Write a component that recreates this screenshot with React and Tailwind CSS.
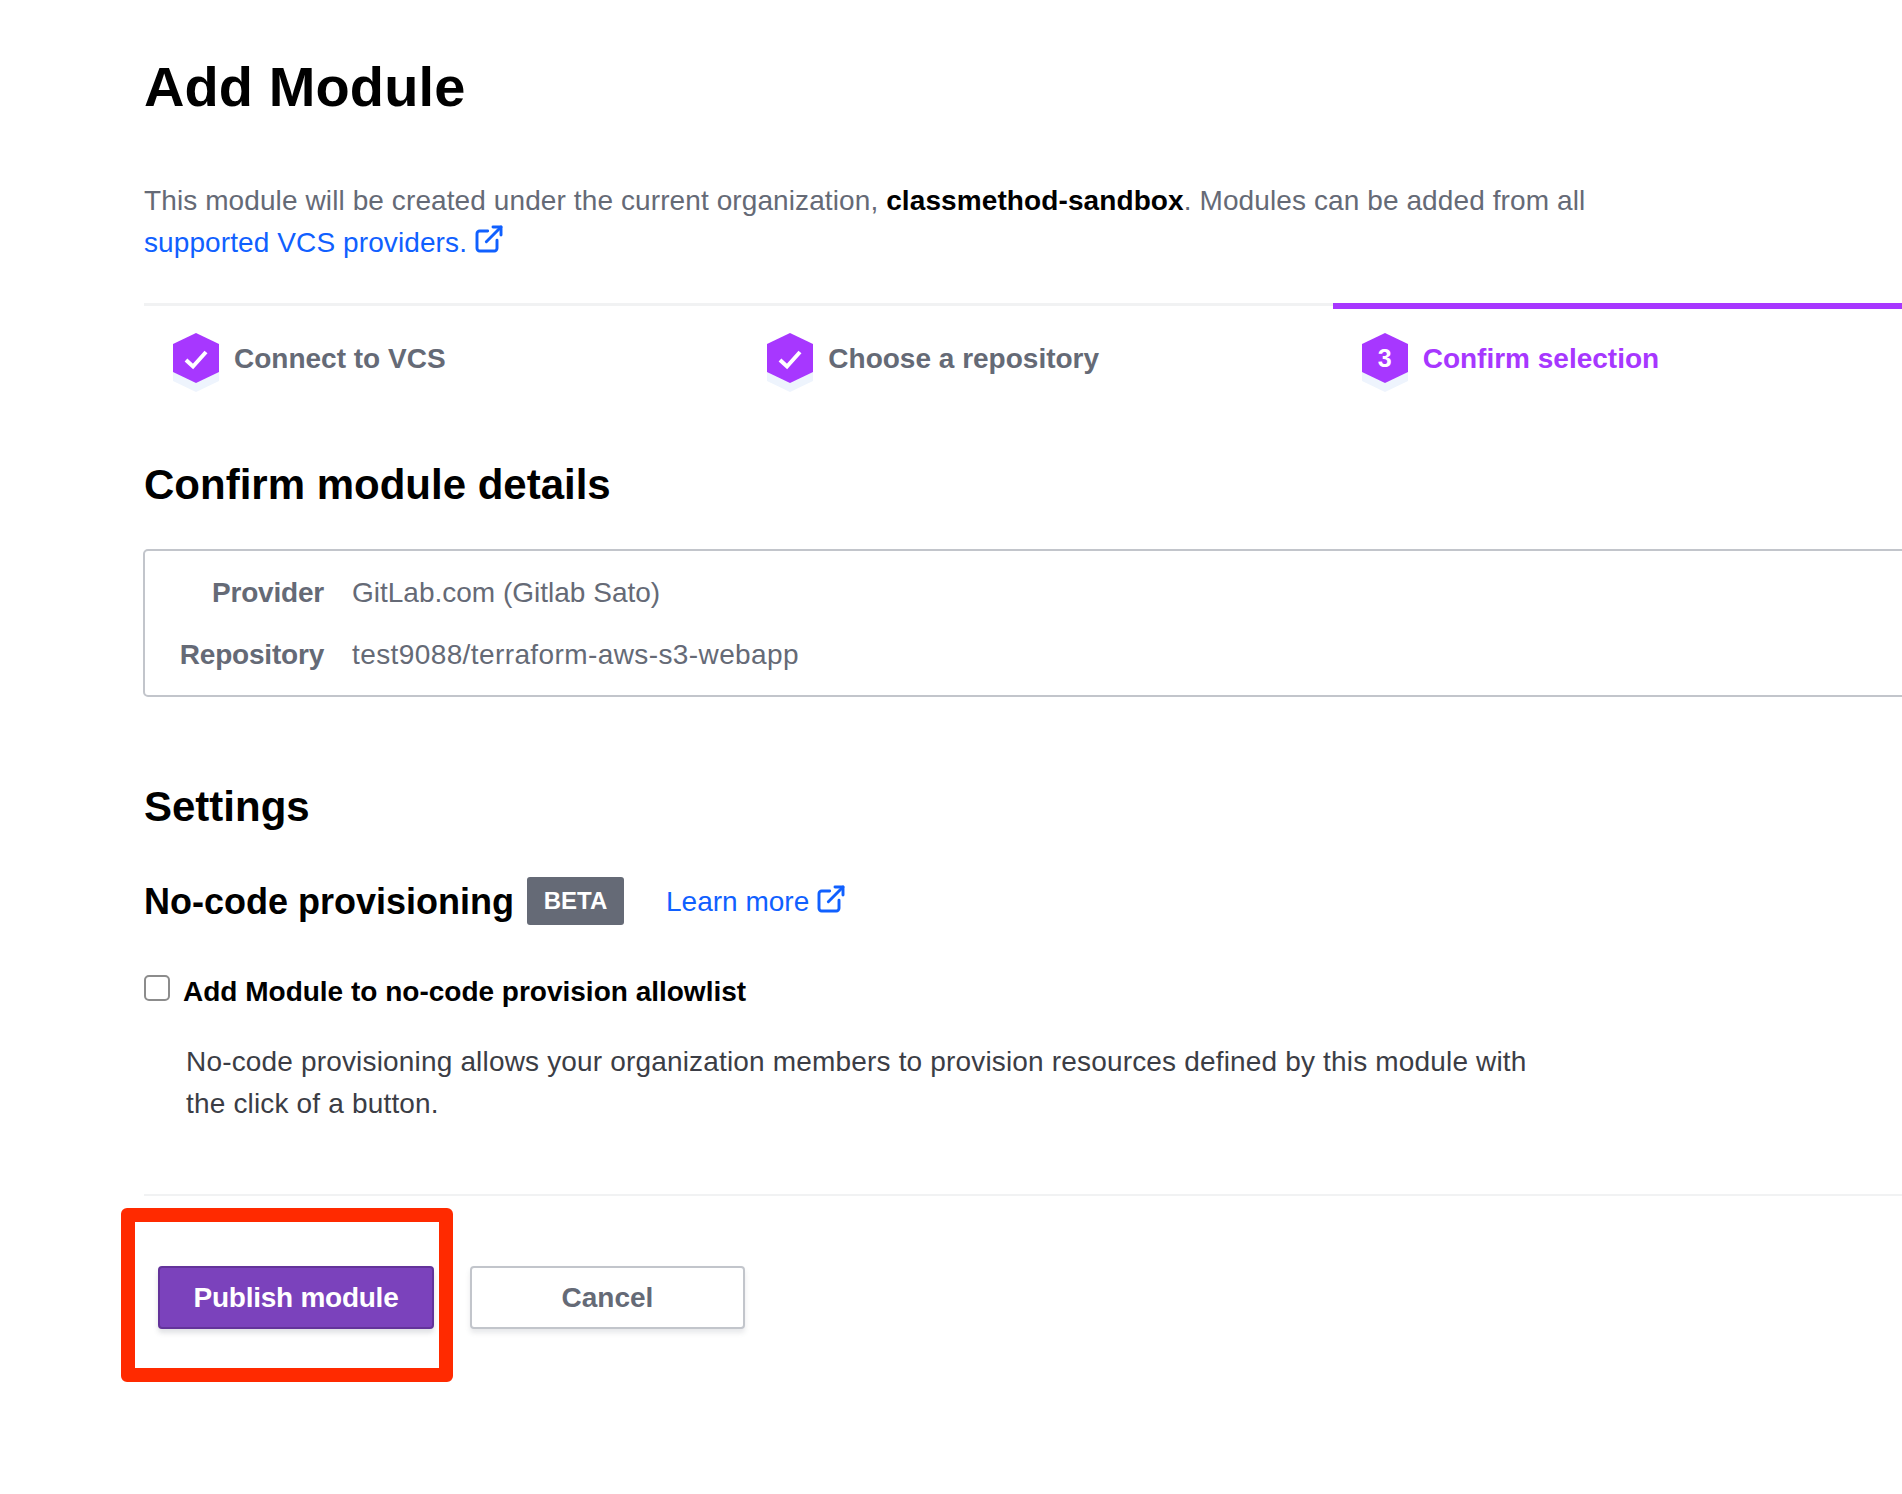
import { ExternalLink } from "lucide-react";

const steps = [
  { label: "Connect to VCS", done: true },
  { label: "Choose a repository", done: true },
  { label: "Confirm selection", done: false },
];

function StepHex({ done, number }) {
  return (
    <div className="relative h-[59px] w-[46px] shrink-0">
      <svg width="46" height="59" viewBox="0 0 46 59" className="block">
        <polygon points="0,20 23,9 46,20 46,48 23,59 0,48" fill="#eef4fd" />
        <polygon points="23,0 46,11 46,39 23,50 0,39 0,11" fill="#a737ff" />
        {done && (
          <path d="M13 27l7 6.5L33 19" fill="none" stroke="#fff" strokeWidth="4" />
        )}
      </svg>
      {!done && (
        <span className="absolute left-0 top-0 flex h-[50px] w-[46px] items-center justify-center text-[25px] font-bold text-white">
          {number}
        </span>
      )}
    </div>
  );
}

function Step({ step, index }) {
  const active = !step.done;
  return (
    <div
      className={
        active
          ? "-mt-[3px] flex gap-[15px] border-t-[6px] border-[#a737ff] pl-[29px] pt-[24px]"
          : "flex gap-[15px] pl-[29px] pt-[27px]"
      }
    >
      <StepHex done={step.done} number={index + 1} />
      <span
        className={`text-[28px] font-bold leading-[52px] ${active ? "text-[#a737ff]" : "text-[#656a76]"}`}
      >
        {step.label}
      </span>
    </div>
  );
}

export default function App() {
  return (
    <div
      className="relative h-[1494px] w-full overflow-hidden bg-white pl-[144px] text-[28px] leading-[42px] text-[#656a76]"
      style={{ fontFamily: '"Liberation Sans", Arial, sans-serif' }}
    >
      <div className="w-[1783px]">
        <h1 className="pt-[55px] text-[56px] font-bold leading-[64px] tracking-[0.1px] text-black">Add Module</h1>

        <p className="mt-[61px] max-w-[1460px] tracking-[0.1px]">
          This module will be created under the current organization,{" "}
          <b className="text-black">classmethod-sandbox</b>. Modules can be added from all{" "}
          <a className="inline-flex items-center gap-1.5 text-[#1060ff]">
            supported VCS providers.
            <ExternalLink size={32} strokeWidth={2.2} className="-mt-2" />
          </a>
        </p>

        <div className="mt-[39px] grid grid-cols-3 border-t-[3px] border-[#f1f2f3]">
          {steps.map((s, i) => (
            <Step key={s.label} step={s} index={i} />
          ))}
        </div>

        <h2 className="mt-[69px] text-[42px] font-bold leading-[48px] text-black">
          Confirm module details
        </h2>

        <div className="-ml-px mt-[40px] grid h-[148px] grid-cols-[179px_1fr] gap-x-[28px] gap-y-[20px] rounded-[5px] border-2 border-[#c2c5cb] pb-[19px] pt-[21px]">
          <span className="text-right font-bold tracking-[-0.2px]">Provider</span>
          <span>GitLab.com (Gitlab Sato)</span>
          <span className="text-right font-bold tracking-[-0.2px]">Repository</span>
          <span className="tracking-[0.4px]">test9088/terraform-aws-s3-webapp</span>
        </div>

        <h2 className="mt-[86px] text-[42px] font-bold leading-[48px] text-black">Settings</h2>

        <div className="mt-[46px] flex h-[48px] items-center">
          <h3 className="pt-[2px] text-[36px] font-bold text-black">No-code provisioning</h3>
          <span className="ml-[13px] flex h-[48px] w-[97px] items-center justify-center rounded-[3px] bg-[#656a76] text-[24px] font-bold text-white">
            BETA
          </span>
          <a className="ml-[42px] flex items-center gap-1.5 pt-[2px] text-[#1060ff]">
            Learn more
            <ExternalLink size={32} strokeWidth={2.2} className="-mt-1.5" />
          </a>
        </div>

        <label className="mt-[46px] flex gap-[13px] font-bold text-black">
          <span className="mt-1 h-[26px] w-[26px] rounded-[5px] border-2 border-[#8c8c8c] bg-white" />
          Add Module to no-code provision allowlist
        </label>

        <p className="mt-[28px] max-w-[1400px] pl-[42px] tracking-[0.17px] text-[#3b3d45]">
          No-code provisioning allows your organization members to provision resources defined by this module with the click of a button.
        </p>

        <div className="mt-[69px] h-[2px] bg-[#f1f2f3]" />

        <div className="ml-[14px] mt-[70px] flex gap-[36px]">
          <button className="h-[63px] w-[276px] rounded-[4px] border-2 border-[#63339a] bg-[#7b42bc] font-bold tracking-[-0.25px] text-white shadow-[0_4px_5px_rgba(101,106,118,0.2)]">
            Publish module
          </button>
          <button className="h-[63px] w-[275px] rounded-[4px] border-2 border-[#c2c5cb] bg-white font-bold text-[#656a76] shadow-[0_4px_5px_rgba(101,106,118,0.15)]">
            Cancel
          </button>
        </div>
      </div>

      {/* red annotation around the publish button */}
      <div className="absolute left-[121px] top-[1208px] h-[174px] w-[332px] rounded-[6px] border-[14px] border-[#ff2a00]" />
    </div>
  );
}
